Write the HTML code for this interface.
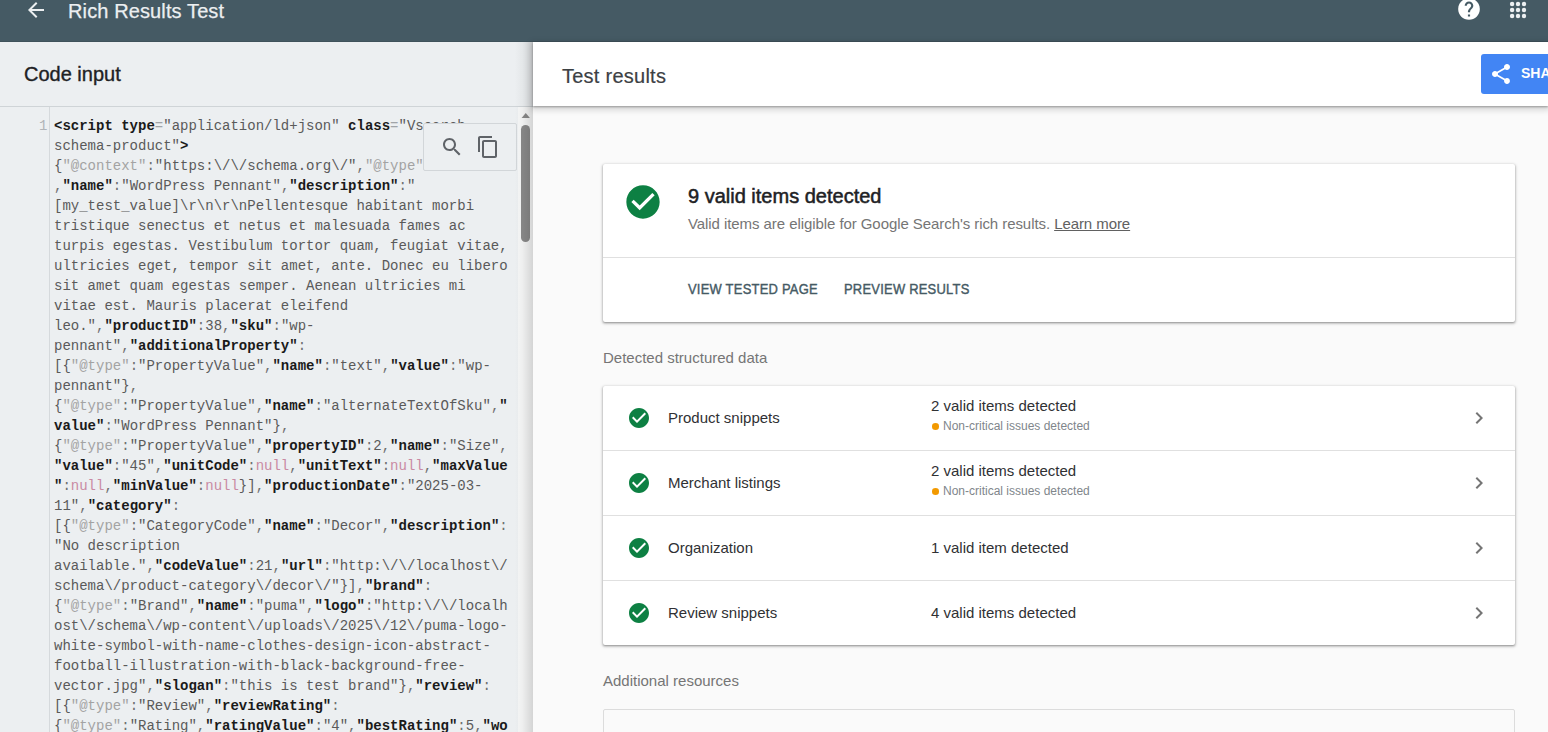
<!DOCTYPE html>
<html><head><meta charset="utf-8">
<style>
*{box-sizing:border-box;margin:0;padding:0}
html,body{width:1548px;height:732px;overflow:hidden;background:#fafafa;font-family:"Liberation Sans",sans-serif}
.hdr{position:absolute;left:0;top:0;width:1548px;height:42px;background:#455a64;border-bottom:1px solid #3f525b}
.hdr .title{position:absolute;left:68px;top:0px;font-size:20px;color:#eceff1;line-height:22px;letter-spacing:.12px;-webkit-text-stroke:.25px #eceff1}
.left{position:absolute;left:0;top:42px;width:533px;height:690px;background:#eceff1}
.left .lh{position:absolute;left:0;top:0;width:533px;height:65px;border-bottom:1px solid #cfd4d7}
.left .lh span{position:absolute;left:24px;top:21px;font-size:20px;color:#202124;line-height:22px;-webkit-text-stroke:.35px #202124}
.code{position:absolute;left:0;top:64px;width:518px;height:626px;overflow:hidden}
.gut{position:absolute;left:49px;top:1px;width:1px;height:626px;background:#d5d9dc}
.ln{position:absolute;left:39px;top:10px;font-family:"Liberation Mono",monospace;font-size:14px;line-height:20px;color:#b0b4b8}
pre{position:absolute;left:54px;top:10px;font-family:"Liberation Mono",monospace;font-size:14px;line-height:20px;color:#555;white-space:pre}
pre b{font-weight:bold;color:#1a1a1a}
pre i{font-style:normal}
.br{color:#5a5a5a}.p{color:#707070}.eq{color:#a0a4a8}.g{color:#a3a3a3}.n{color:#c98aa3}.s{color:#5a5a5a}
.ov{position:absolute;left:423px;top:17px;width:94px;height:48px;border:1px solid #d2d6d9;border-radius:2px;background:#eceff1}
.sb{position:absolute;left:518px;top:65px;width:15px;height:625px;background:#f6f7f7}
.right{position:absolute;left:533px;top:42px;width:1015px;height:690px;background:#fafafa}
.rh{position:absolute;left:0;top:0;width:1015px;height:64px;background:#fff;box-shadow:0 1px 2px rgba(0,0,0,.3),0 2px 6px 2px rgba(0,0,0,.15)}
.rh .t{position:absolute;left:29px;top:23px;font-size:20px;color:#3c4043;line-height:22px;letter-spacing:.25px;-webkit-text-stroke:.2px #3c4043}
.share{position:absolute;left:948px;top:12px;width:100px;height:40px;background:#4285f4;border-radius:3px}
.card{position:absolute;background:#fff;border-radius:2px;box-shadow:0 1px 3px rgba(0,0,0,.25)}

.abs{position:absolute;white-space:nowrap}
.card{position:absolute;background:#fff;border-radius:2px;box-shadow:0 1px 2px rgba(0,0,0,.3),0 1px 3px 1px rgba(0,0,0,.15)}
.h1{font-size:20px;line-height:20px;color:#202124;-webkit-text-stroke:.5px #202124}
.sub{font-size:15px;line-height:15px;color:#757575;letter-spacing:-.07px}
.sub u{color:#616161}
.btn{font-size:14px;line-height:14px;color:#455a64;-webkit-text-stroke:.4px #455a64;letter-spacing:.25px;transform-origin:0 0;transform:scaleX(.925)}
.sec{font-size:15px;line-height:15px;color:#757575}
.row{position:absolute;left:0;width:912px;height:65px;border-top:1px solid #e0e0e0}
.row:first-child{border-top:none}
.rl{font-size:15px;line-height:15px;color:#303134}
.rs{font-size:15px;line-height:15px;color:#303134}
.rn{font-size:12px;line-height:12px;color:#80868b}
.dot{position:absolute;width:7px;height:6.5px;border-radius:50%;background:#f29900}
</style></head><body>
<div class="hdr"><div class="title">Rich Results Test</div>
<svg class="abs" style="left:24px;top:-2px" width="24" height="24" viewBox="0 0 24 24"><path fill="#eceff1" d="M20 11H7.830l5.590-5.590L12 4l-8 8 8 8 1.410-1.410L7.830 13H20v-2z"/></svg>
<svg class="abs" style="left:1456px;top:-4px" width="26" height="26" viewBox="0 0 24 24"><path fill="#fff" d="M12 2C6.480 2 2 6.480 2 12s4.480 10 10 10 10-4.480 10-10S17.520 2 12 2zm1 17h-2v-2h2v2zm2.070-7.750l-.9.920C13.450 12.900 13 13.500 13 15h-2v-.5c0-1.100.450-2.100 1.170-2.830l1.240-1.260c.370-.360.590-.860.590-1.410 0-1.100-.9-2-2-2s-2 .9-2 2H8c0-2.210 1.790-4 4-4s4 1.790 4 4c0 .880-.360 1.680-.930 2.250z"/></svg>
<svg class="abs" style="left:1508px;top:0px" width="20" height="20" viewBox="0 0 20 20"><g fill="#eceff1"><circle cx="4.1" cy="4" r="2.2"/><circle cx="10" cy="4" r="2.2"/><circle cx="16" cy="4" r="2.2"/><circle cx="4.1" cy="10" r="2.2"/><circle cx="10" cy="10" r="2.2"/><circle cx="16" cy="10" r="2.2"/><circle cx="4.1" cy="16" r="2.2"/><circle cx="10" cy="16" r="2.2"/><circle cx="16" cy="16" r="2.2"/></g></svg>
</div>
<div class="left">
 <div class="lh"><span>Code input</span></div>
 <div class="code">
  <div class="gut"></div>
  <div class="ln">1</div>
  <pre id="code"><b>&lt;script</b><i class="s"> </i><b>type</b><i class="eq">=</i><i class="s">"application/ld+json" </i><b>class</b><i class="eq">=</i><i class="s">"Vsearch-</i>
<i class="s">schema-product"</i><b>&gt;</b>
<i class="br">{</i><i class="g">"@context"</i><i class="p">:</i><i class="s">"https:\/\/schema.org\/"</i><i class="p">,</i><i class="g">"@type"</i><i class="p">:</i><i class="s">"Product"</i>
<i class="p">,</i><b>"name"</b><i class="p">:</i><i class="s">"WordPress Pennant"</i><i class="p">,</i><b>"description"</b><i class="p">:</i><i class="s">"</i>
<i class="s">[my_test_value]\r\n\r\nPellentesque habitant morbi</i>
<i class="s">tristique senectus et netus et malesuada fames ac</i>
<i class="s">turpis egestas. Vestibulum tortor quam, feugiat vitae,</i>
<i class="s">ultricies eget, tempor sit amet, ante. Donec eu libero</i>
<i class="s">sit amet quam egestas semper. Aenean ultricies mi</i>
<i class="s">vitae est. Mauris placerat eleifend</i>
<i class="s">leo."</i><i class="p">,</i><b>"productID"</b><i class="p">:</i><i class="s">38</i><i class="p">,</i><b>"sku"</b><i class="p">:</i><i class="s">"wp-</i>
<i class="s">pennant"</i><i class="p">,</i><b>"additionalProperty"</b><i class="p">:</i>
<i class="br">[{</i><i class="g">"@type"</i><i class="p">:</i><i class="s">"PropertyValue"</i><i class="p">,</i><b>"name"</b><i class="p">:</i><i class="s">"text"</i><i class="p">,</i><b>"value"</b><i class="p">:</i><i class="s">"wp-</i>
<i class="s">pennant"</i><i class="br">}</i><i class="p">,</i>
<i class="br">{</i><i class="g">"@type"</i><i class="p">:</i><i class="s">"PropertyValue"</i><i class="p">,</i><b>"name"</b><i class="p">:</i><i class="s">"alternateTextOfSku"</i><i class="p">,</i><b>"</b>
<b>value"</b><i class="p">:</i><i class="s">"WordPress Pennant"</i><i class="br">}</i><i class="p">,</i>
<i class="br">{</i><i class="g">"@type"</i><i class="p">:</i><i class="s">"PropertyValue"</i><i class="p">,</i><b>"propertyID"</b><i class="p">:</i><i class="s">2</i><i class="p">,</i><b>"name"</b><i class="p">:</i><i class="s">"Size"</i><i class="p">,</i>
<b>"value"</b><i class="p">:</i><i class="s">"45"</i><i class="p">,</i><b>"unitCode"</b><i class="p">:</i><i class="n">null</i><i class="p">,</i><b>"unitText"</b><i class="p">:</i><i class="n">null</i><i class="p">,</i><b>"maxValue</b>
<b>"</b><i class="p">:</i><i class="n">null</i><i class="p">,</i><b>"minValue"</b><i class="p">:</i><i class="n">null</i><i class="br">}]</i><i class="p">,</i><b>"productionDate"</b><i class="p">:</i><i class="s">"2025-03-</i>
<i class="s">11"</i><i class="p">,</i><b>"category"</b><i class="p">:</i>
<i class="br">[{</i><i class="g">"@type"</i><i class="p">:</i><i class="s">"CategoryCode"</i><i class="p">,</i><b>"name"</b><i class="p">:</i><i class="s">"Decor"</i><i class="p">,</i><b>"description"</b><i class="p">:</i>
<i class="s">"No description</i>
<i class="s">available."</i><i class="p">,</i><b>"codeValue"</b><i class="p">:</i><i class="s">21</i><i class="p">,</i><b>"url"</b><i class="p">:</i><i class="s">"http:\/\/localhost\/</i>
<i class="s">schema\/product-category\/decor\/"</i><i class="br">}]</i><i class="p">,</i><b>"brand"</b><i class="p">:</i>
<i class="br">{</i><i class="g">"@type"</i><i class="p">:</i><i class="s">"Brand"</i><i class="p">,</i><b>"name"</b><i class="p">:</i><i class="s">"puma"</i><i class="p">,</i><b>"logo"</b><i class="p">:</i><i class="s">"http:\/\/localh</i>
<i class="s">ost\/schema\/wp-content\/uploads\/2025\/12\/puma-logo-</i>
<i class="s">white-symbol-with-name-clothes-design-icon-abstract-</i>
<i class="s">football-illustration-with-black-background-free-</i>
<i class="s">vector.jpg"</i><i class="p">,</i><b>"slogan"</b><i class="p">:</i><i class="s">"this is test brand"</i><i class="br">}</i><i class="p">,</i><b>"review"</b><i class="p">:</i>
<i class="br">[{</i><i class="g">"@type"</i><i class="p">:</i><i class="s">"Review"</i><i class="p">,</i><b>"reviewRating"</b><i class="p">:</i>
<i class="br">{</i><i class="g">"@type"</i><i class="p">:</i><i class="s">"Rating"</i><i class="p">,</i><b>"ratingValue"</b><i class="p">:</i><i class="s">"4"</i><i class="p">,</i><b>"bestRating"</b><i class="p">:</i><i class="s">5</i><i class="p">,</i><b>"wo</b></pre>
  <div class="ov"><svg class="abs" style="left:16px;top:11px" width="24" height="24" viewBox="0 0 24 24"><path fill="#5f6368" d="M15.500 14h-.790l-.280-.270C15.410 12.590 16 11.110 16 9.500 16 5.910 13.090 3 9.500 3S3 5.910 3 9.500 5.910 16 9.500 16c1.610 0 3.090-.590 4.230-1.570l.270.280v.790l5 4.990L20.490 19l-4.990-5zm-6 0C7.010 14 5 11.990 5 9.500S7.010 5 9.500 5 14 7.010 14 9.500 11.990 14 9.500 14z"/></svg><svg class="abs" style="left:52px;top:11px" width="24" height="24" viewBox="0 0 24 24"><path fill="#5f6368" d="M16 1H4c-1.100 0-2 .9-2 2v14h2V3h12V1zm3 4H8c-1.100 0-2 .9-2 2v14c0 1.100.9 2 2 2h11c1.100 0 2-.9 2-2V7c0-1.100-.9-2-2-2zm0 16H8V7h11v14z"/></svg></div>
 </div>
 <div class="sb"><svg class="abs" style="left:2.5px;top:5.5px" width="9.5" height="5.5" viewBox="0 0 10 6"><path fill="#8a8a8a" d="M5 0L10 6H0z"/></svg><div class="abs" style="left:2.5px;top:17.5px;width:9.5px;height:117.5px;border-radius:5px;background:#8a8a8a"></div></div>
</div>
<div class="abs" style="left:515px;top:42px;width:18px;height:690px;background:linear-gradient(to right,rgba(0,0,0,0),rgba(0,0,0,.03) 40%,rgba(0,0,0,.14))"></div>
<div class="right">
 <div class="rh"><div class="t">Test results</div><div class="share"><svg class="abs" style="left:7.5px;top:8px" width="24" height="24" viewBox="0 0 24 24"><path fill="#fff" d="M18 16.080c-.760 0-1.440.3-1.960.770L8.910 12.700c.050-.230.090-.460.090-.7s-.040-.470-.090-.7l7.050-4.110c.540.5 1.250.810 2.040.810 1.660 0 3-1.340 3-3s-1.340-3-3-3-3 1.340-3 3c0 .240.040.470.090.7L8.040 9.810C7.500 9.310 6.790 9 6 9c-1.660 0-3 1.340-3 3s1.340 3 3 3c.790 0 1.500-.310 2.040-.810l7.120 4.160c-.050.210-.080.430-.080.650 0 1.610 1.310 2.920 2.920 2.920 1.610 0 2.920-1.310 2.920-2.920s-1.310-2.920-2.920-2.920z"/></svg><span class="abs" style="left:40px;top:12px;font-size:14px;line-height:14px;font-weight:bold;color:#fff">SHARE</span></div></div>
</div>

<div class="card" style="left:603px;top:164px;width:912px;height:158px">
 <div class="abs" style="left:0;top:93px;width:912px;height:1px;background:#e0e0e0"></div>
</div>
<svg class="abs" style="left:623px;top:182px" width="40" height="40" viewBox="0 0 24 24"><path fill="#0d8043" d="M12 2C6.48 2 2 6.48 2 12s4.48 10 10 10 10-4.48 10-10S17.52 2 12 2zm-2 15l-5-5 1.41-1.41L10 14.17l7.59-7.59L19 8l-9 9z"/></svg>
<div class="abs h1" style="left:688px;top:186px">9 valid items detected</div>
<div class="abs sub" style="left:688px;top:216px">Valid items are eligible for Google Search's rich results. <u>Learn more</u></div>
<div class="abs btn" style="left:688px;top:282px">VIEW TESTED PAGE</div>
<div class="abs btn" style="left:844px;top:282px">PREVIEW RESULTS</div>
<div class="abs sec" style="left:603px;top:350px">Detected structured data</div>
<div class="card" style="left:603px;top:386px;width:912px;height:259px">
 <div class="row" style="top:0"></div>
 <div class="row" style="top:64px"></div>
 <div class="row" style="top:129px"></div>
 <div class="row" style="top:194px"></div>
</div>
<svg class="abs" style="left:627px;top:406px" width="24" height="24" viewBox="0 0 24 24"><path fill="#0d8043" d="M12 2C6.48 2 2 6.48 2 12s4.48 10 10 10 10-4.48 10-10S17.52 2 12 2zm-2 15l-5-5 1.41-1.41L10 14.17l7.59-7.59L19 8l-9 9z"/></svg><div class="abs rl" style="left:668px;top:410px">Product snippets</div>
<div class="abs rs" style="left:931px;top:398px">2 valid items detected</div>
<div class="dot" style="left:932px;top:423px"></div>
<div class="abs rn" style="left:943px;top:420px">Non-critical issues detected</div>
<svg class="abs" style="left:1467px;top:406px" width="24" height="24" viewBox="0 0 24 24"><path fill="#757575" d="M10 6L8.59 7.41 13.17 12l-4.58 4.59L10 18l6-6z"/></svg><svg class="abs" style="left:627px;top:471px" width="24" height="24" viewBox="0 0 24 24"><path fill="#0d8043" d="M12 2C6.48 2 2 6.48 2 12s4.48 10 10 10 10-4.48 10-10S17.52 2 12 2zm-2 15l-5-5 1.41-1.41L10 14.17l7.59-7.59L19 8l-9 9z"/></svg><div class="abs rl" style="left:668px;top:475px">Merchant listings</div>
<div class="abs rs" style="left:931px;top:463px">2 valid items detected</div>
<div class="dot" style="left:932px;top:488px"></div>
<div class="abs rn" style="left:943px;top:485px">Non-critical issues detected</div>
<svg class="abs" style="left:1467px;top:471px" width="24" height="24" viewBox="0 0 24 24"><path fill="#757575" d="M10 6L8.59 7.41 13.17 12l-4.58 4.59L10 18l6-6z"/></svg><svg class="abs" style="left:627px;top:536px" width="24" height="24" viewBox="0 0 24 24"><path fill="#0d8043" d="M12 2C6.48 2 2 6.48 2 12s4.48 10 10 10 10-4.48 10-10S17.52 2 12 2zm-2 15l-5-5 1.41-1.41L10 14.17l7.59-7.59L19 8l-9 9z"/></svg><div class="abs rl" style="left:668px;top:540px">Organization</div>
<div class="abs rs" style="left:931px;top:540px">1 valid item detected</div>
<svg class="abs" style="left:1467px;top:536px" width="24" height="24" viewBox="0 0 24 24"><path fill="#757575" d="M10 6L8.59 7.41 13.17 12l-4.58 4.59L10 18l6-6z"/></svg><svg class="abs" style="left:627px;top:601px" width="24" height="24" viewBox="0 0 24 24"><path fill="#0d8043" d="M12 2C6.48 2 2 6.48 2 12s4.48 10 10 10 10-4.48 10-10S17.52 2 12 2zm-2 15l-5-5 1.41-1.41L10 14.17l7.59-7.59L19 8l-9 9z"/></svg><div class="abs rl" style="left:668px;top:605px">Review snippets</div>
<div class="abs rs" style="left:931px;top:605px">4 valid items detected</div>
<svg class="abs" style="left:1467px;top:601px" width="24" height="24" viewBox="0 0 24 24"><path fill="#757575" d="M10 6L8.59 7.41 13.17 12l-4.58 4.59L10 18l6-6z"/></svg>
<div class="abs sec" style="left:603px;top:673px">Additional resources</div>
<div class="abs" style="left:603px;top:709px;width:912px;height:100px;border:1px solid #dcdcdc;border-radius:2px"></div>
</body></html>
